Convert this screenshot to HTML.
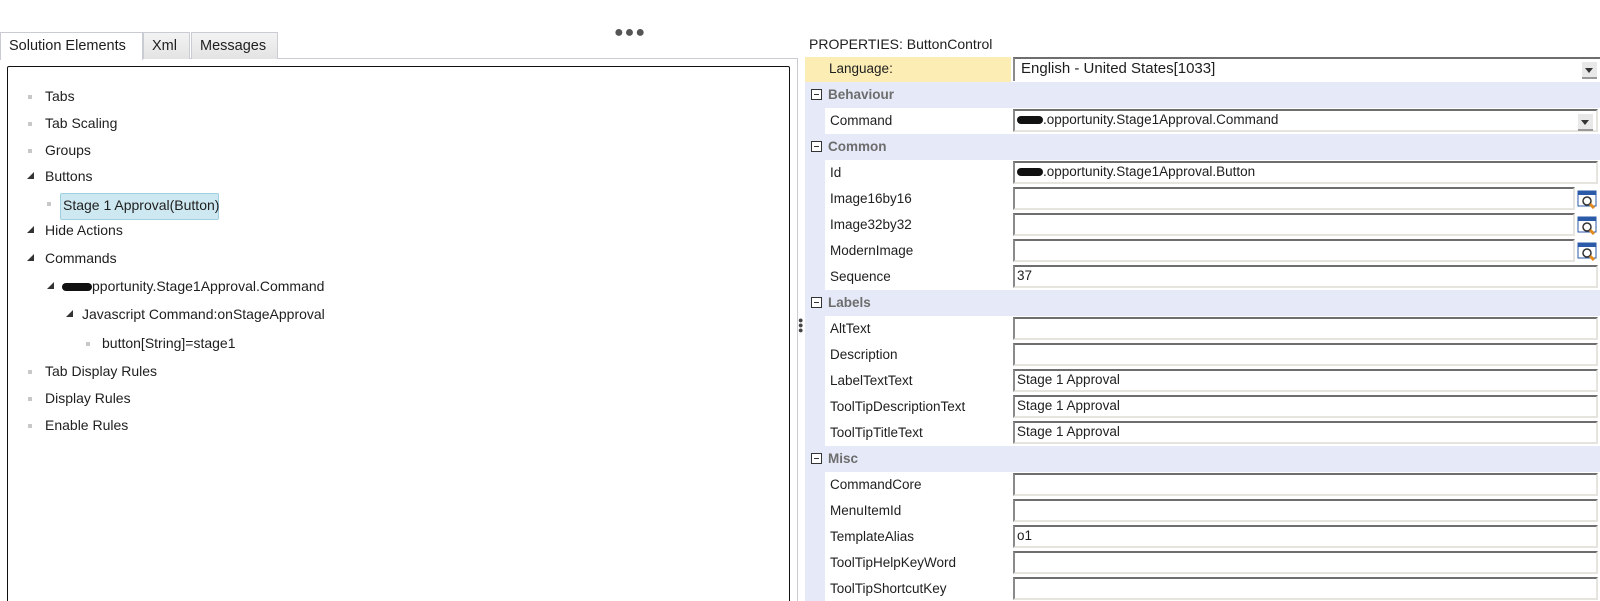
<!DOCTYPE html>
<html><head><meta charset="utf-8"><style>
*{box-sizing:border-box;margin:0;padding:0}
html,body{width:1600px;height:601px;overflow:hidden;background:#fff}
body{font-family:"Liberation Sans",sans-serif;color:#1e1e1e}
#w{position:relative;width:1600px;height:601px;overflow:hidden}
.a{position:absolute}
.tab{position:absolute;top:32px;height:27px;border:1px solid #c9cdd3;border-bottom:none;background:linear-gradient(#f3f3f3,#e3e3e3);font-size:14.5px;padding:5px 8px 0}
.ti{position:absolute;font-size:14px;white-space:nowrap}
.b{position:absolute;width:4px;height:4px;background:#c8c8c8}
.tri{position:absolute;width:0;height:0;border-left:7px solid transparent;border-bottom:7px solid #333}
.row{position:absolute;left:825px;width:775px;height:26px;font-size:13.5px}
.lbl{position:absolute;left:0;top:0;width:186px;height:25px;background:#fff;padding:5px 0 0 5px}
.val{position:absolute;left:188px;top:1px;width:585px;height:23px;background:#fff;border-top:2px solid #6e6e6e;border-left:2px solid #8a8a8a;border-right:2px solid #e6e4de;border-bottom:2px solid #e6e4de;padding:1px 0 0 2px}
.hdr{position:absolute;left:805px;width:795px;height:26px;background:#e6eaf8;font-size:13.5px;font-weight:bold;color:#6d6d6d}
.hdr span{position:absolute;left:23px;top:5px}
.hdr i{position:absolute;left:-14px;top:7px;width:11px;height:11px;border:1px solid #333;background:#fff}
.hdr i:after{content:"";position:absolute;left:2px;top:4px;width:5px;height:1px;background:#333}
.ic{position:absolute;left:752px;top:3px;width:20px;height:20px}
.dd{position:absolute;right:3px;top:3px;width:15px;height:17px;background:#e8e8e8;border-bottom:2px solid #999}
.dd:after{content:"";position:absolute;left:3px;top:6px;border-left:4px solid transparent;border-right:4px solid transparent;border-top:5px solid #333}
.blot{display:inline-block;width:26px;height:8px;background:#111;border-radius:4px;vertical-align:middle}
</style></head><body><div id="w">
<div class="a" style="left:614px;top:24px;font-size:16px;color:#555;letter-spacing:1px">&#9679;&#9679;&#9679;</div>
<div class="a" style="left:0;top:58px;width:798px;height:1px;background:#c9cdd3"></div>
<div class="a" style="left:797px;top:58px;width:1px;height:543px;background:#c9cdd3"></div>
<div class="tab" style="left:0;width:143px;background:#fff;height:28px">Solution Elements</div>
<div class="tab" style="left:143px;width:47px">Xml</div>
<div class="tab" style="left:191px;width:87px">Messages</div>
<div class="a" style="left:7px;top:66px;width:783px;height:560px;border:1px solid #111;border-radius:2px"></div>
<div class="b" style="left:28px;top:95px"></div><div class="ti" style="left:45px;top:88px">Tabs</div>
<div class="b" style="left:28px;top:122px"></div><div class="ti" style="left:45px;top:115px">Tab Scaling</div>
<div class="b" style="left:28px;top:149px"></div><div class="ti" style="left:45px;top:142px">Groups</div>
<div class="tri" style="left:27px;top:172px"></div><div class="ti" style="left:45px;top:168px">Buttons</div>
<div class="b" style="left:47px;top:202px"></div>
<div class="a" style="left:60px;top:193px;width:159px;height:27px;background:#cde8f0;border:1px solid #9dd0e0;border-radius:2px"></div>
<div class="ti" style="left:63px;top:197px">Stage 1 Approval(Button)</div>
<div class="tri" style="left:27px;top:226px"></div><div class="ti" style="left:45px;top:222px">Hide Actions</div>
<div class="tri" style="left:27px;top:254px"></div><div class="ti" style="left:45px;top:250px">Commands</div>
<div class="tri" style="left:47px;top:282px"></div><div class="ti" style="left:62px;top:278px"><span class="blot" style="width:30px"></span>pportunity.Stage1Approval.Command</div>
<div class="tri" style="left:66px;top:310px"></div><div class="ti" style="left:82px;top:306px">Javascript Command:onStageApproval</div>
<div class="b" style="left:86px;top:342px"></div><div class="ti" style="left:102px;top:335px">button[String]=stage1</div>
<div class="b" style="left:28px;top:370px"></div><div class="ti" style="left:45px;top:363px">Tab Display Rules</div>
<div class="b" style="left:28px;top:397px"></div><div class="ti" style="left:45px;top:390px">Display Rules</div>
<div class="b" style="left:28px;top:424px"></div><div class="ti" style="left:45px;top:417px">Enable Rules</div>
<div class="a" style="left:798px;top:318px;font-size:9px;line-height:5px;color:#444">&#9679;<br>&#9679;<br>&#9679;</div>
<div class="a" style="left:809px;top:36px;font-size:14px">PROPERTIES: ButtonControl</div>
<div class="a" style="left:805px;top:58px;width:20px;height:543px;background:#e6eaf8"></div>
<div class="a" style="left:805px;top:57px;width:206px;height:25px;background:#fcedb5;font-size:13.5px;padding:4px 0 0 24px">Language:</div>
<div class="a" style="left:1013px;top:57px;width:587px;height:24px;background:#fff;border-top:2px solid #6e6e6e;border-left:2px solid #8a8a8a;font-size:15px;padding:1px 0 0 6px">English - United States[1033]<div class="dd"></div></div>
<div class="hdr" style="top:82px"><i style="left:6px"></i><span>Behaviour</span></div>
<div class="row" style="top:108px"><div class="lbl">Command</div><div class="val"><span class="blot"></span>.opportunity.Stage1Approval.Command<div class="dd"></div></div></div>
<div class="hdr" style="top:134px"><i style="left:6px"></i><span>Common</span></div>
<div class="row" style="top:160px"><div class="lbl">Id</div><div class="val"><span class="blot"></span>.opportunity.Stage1Approval.Button</div></div>
<div class="row" style="top:186px"><div class="lbl">Image16by16</div><div class="val" style="width:562px"></div><svg class="ic" viewBox="0 0 20 20"><rect x="1" y="2" width="18" height="15" fill="#fff" stroke="#2a5aa8"/><rect x="1" y="2" width="18" height="4" fill="#2a5aa8"/><circle cx="10" cy="12" r="4" fill="none" stroke="#333" stroke-width="1.5"/><path d="M13 15l4 4" stroke="#e08a20" stroke-width="3"/></svg></div>
<div class="row" style="top:212px"><div class="lbl">Image32by32</div><div class="val" style="width:562px"></div><svg class="ic" viewBox="0 0 20 20"><rect x="1" y="2" width="18" height="15" fill="#fff" stroke="#2a5aa8"/><rect x="1" y="2" width="18" height="4" fill="#2a5aa8"/><circle cx="10" cy="12" r="4" fill="none" stroke="#333" stroke-width="1.5"/><path d="M13 15l4 4" stroke="#e08a20" stroke-width="3"/></svg></div>
<div class="row" style="top:238px"><div class="lbl">ModernImage</div><div class="val" style="width:562px"></div><svg class="ic" viewBox="0 0 20 20"><rect x="1" y="2" width="18" height="15" fill="#fff" stroke="#2a5aa8"/><rect x="1" y="2" width="18" height="4" fill="#2a5aa8"/><circle cx="10" cy="12" r="4" fill="none" stroke="#333" stroke-width="1.5"/><path d="M13 15l4 4" stroke="#e08a20" stroke-width="3"/></svg></div>
<div class="row" style="top:264px"><div class="lbl">Sequence</div><div class="val">37</div></div>
<div class="hdr" style="top:290px"><i style="left:6px"></i><span>Labels</span></div>
<div class="row" style="top:316px"><div class="lbl">AltText</div><div class="val"></div></div>
<div class="row" style="top:342px"><div class="lbl">Description</div><div class="val"></div></div>
<div class="row" style="top:368px"><div class="lbl">LabelTextText</div><div class="val">Stage 1 Approval</div></div>
<div class="row" style="top:394px"><div class="lbl">ToolTipDescriptionText</div><div class="val">Stage 1 Approval</div></div>
<div class="row" style="top:420px"><div class="lbl">ToolTipTitleText</div><div class="val">Stage 1 Approval</div></div>
<div class="hdr" style="top:446px"><i style="left:6px"></i><span>Misc</span></div>
<div class="row" style="top:472px"><div class="lbl">CommandCore</div><div class="val"></div></div>
<div class="row" style="top:498px"><div class="lbl">MenuItemId</div><div class="val"></div></div>
<div class="row" style="top:524px"><div class="lbl">TemplateAlias</div><div class="val">o1</div></div>
<div class="row" style="top:550px"><div class="lbl">ToolTipHelpKeyWord</div><div class="val"></div></div>
<div class="row" style="top:576px"><div class="lbl">ToolTipShortcutKey</div><div class="val"></div></div>
<div class="row" style="top:602px"><div class="lbl"></div><div class="val"></div></div>
</div></body></html>
